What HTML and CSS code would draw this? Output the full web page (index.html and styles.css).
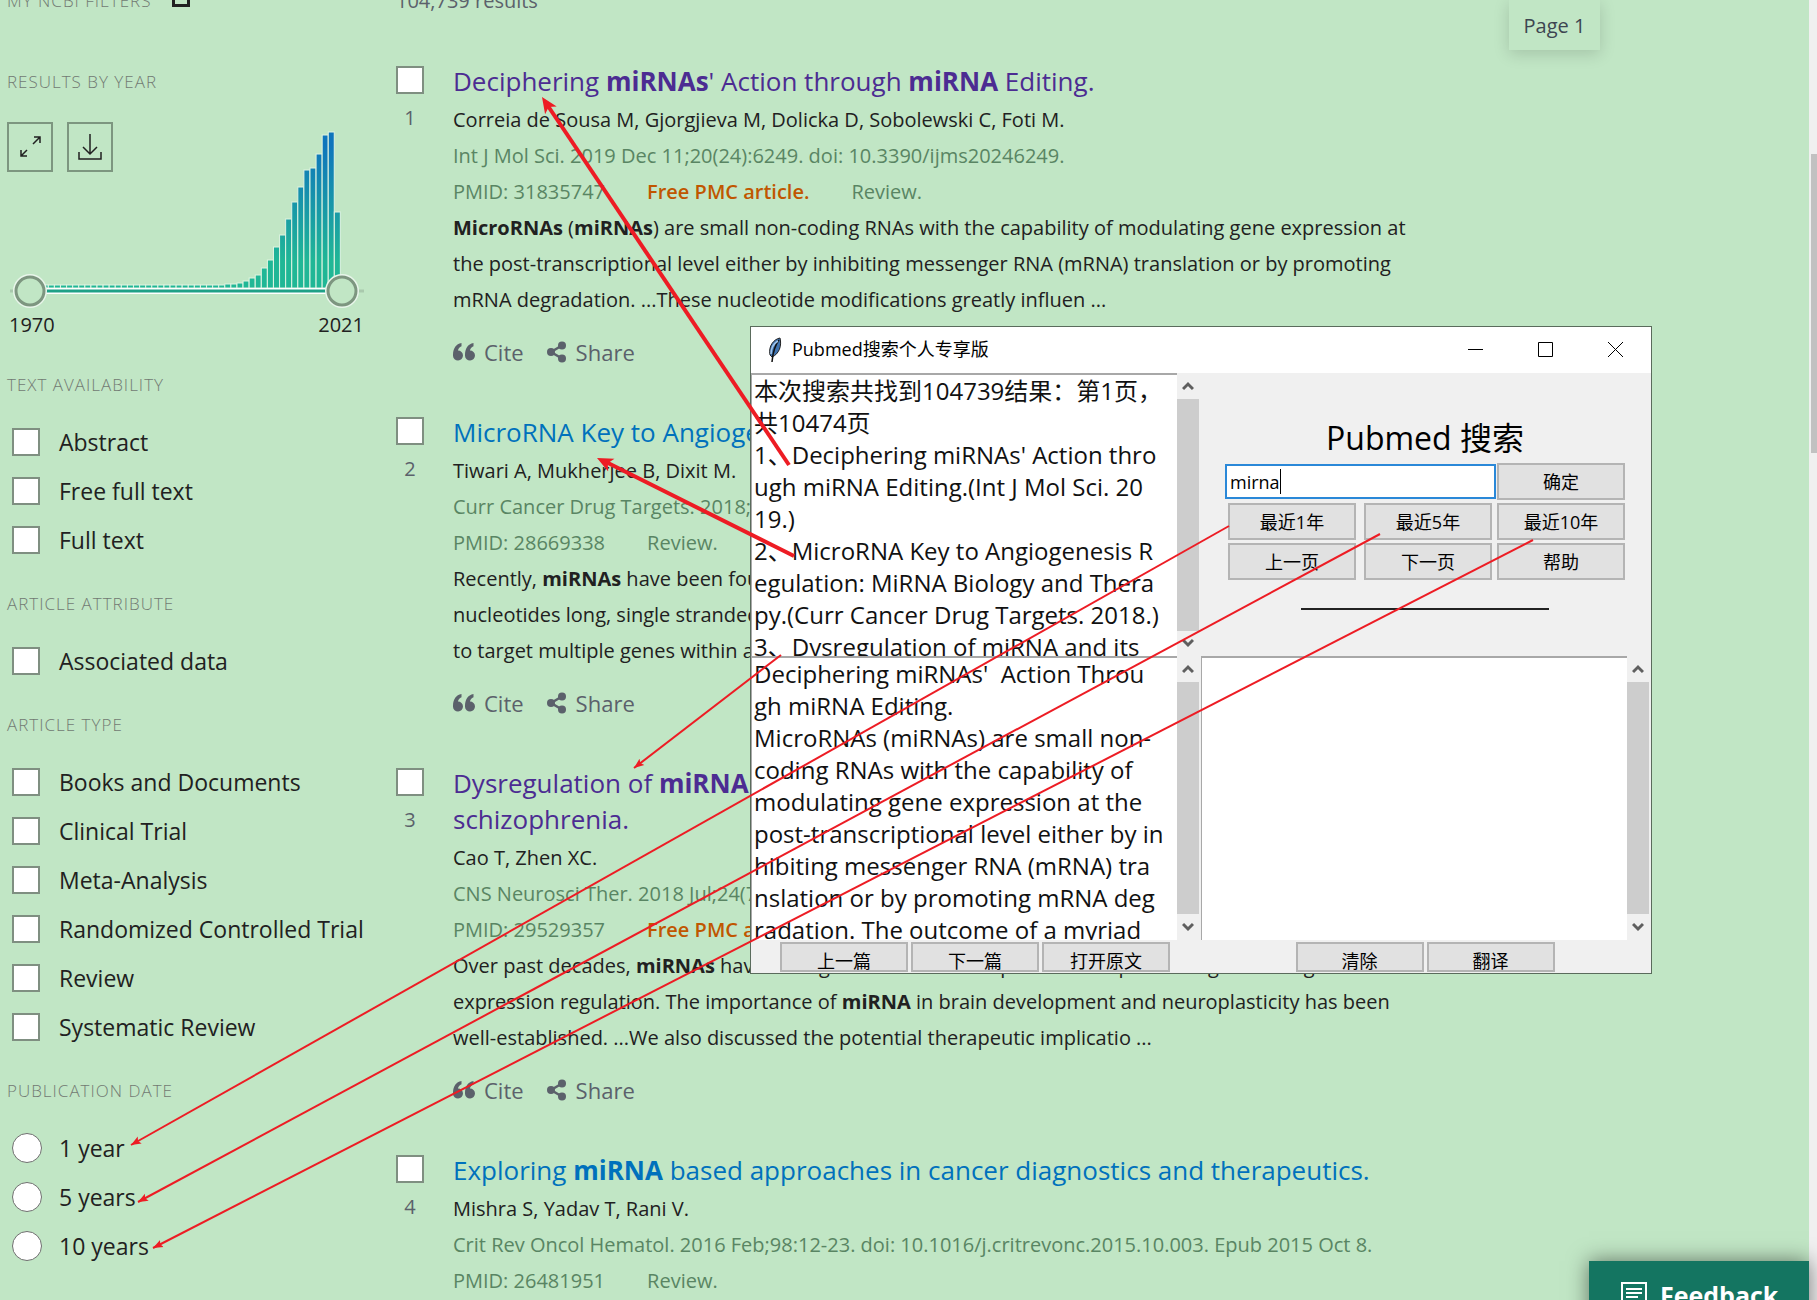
FILE: index.html
```html
<!DOCTYPE html>
<html lang="en">
<head>
    <meta charset="UTF-8">
    <meta name="viewport" content="width=device-width, initial-scale=1.0">
    <title>mirna - Search Results</title>
    <link rel="stylesheet" href="styles.css">
</head>
<body>
    <!-- icons used more than once -->
    <svg class="sprite" aria-hidden="true">
        <symbol id="icon-quote" viewBox="0 0 22 20">
            <path d="M8.500 1v3.200C6.500 4.800 5.200 6.500 5 8.600a5 5 0 1 1-5 5.200C-.2 7 2.500 2 8.500 1zM20.500 1v3.200c-2 .6-3.300 2.300-3.500 4.400a5 5 0 1 1-5 5.200C11.800 7 14.500 2 20.500 1z"/>
        </symbol>
        <symbol id="icon-share" viewBox="0 0 20 22">
            <path d="M15 4.500L4 11l11 6.500" fill="none" stroke="#5b616b" stroke-width="2.500"/>
            <circle cx="15" cy="4.500" r="4"/>
            <circle cx="4" cy="11" r="4"/>
            <circle cx="15" cy="17.500" r="4"/>
        </symbol>
        <symbol id="icon-up" viewBox="0 0 12 10">
            <path d="M1 8l5-5 5 5" fill="none" stroke="#5f5f5f" stroke-width="3"/>
        </symbol>
        <symbol id="icon-down" viewBox="0 0 12 10">
            <path d="M1 2l5 5 5-5" fill="none" stroke="#5f5f5f" stroke-width="3"/>
        </symbol>
    </svg>

    <div class="layout">
        <aside class="sidebar">
            <h3 class="my-filters">MY NCBI FILTERS <span class="filter-box"></span></h3>

            <h3>RESULTS BY YEAR</h3>
            <div class="timeline">
                <svg class="timeline-chart" viewBox="7 122 357 188" width="357" height="188">
                    <defs>
                        <linearGradient id="barFill" gradientUnits="userSpaceOnUse" x1="0" y1="145" x2="0" y2="262">
                            <stop offset="0" stop-color="#0f75bc"/>
                            <stop offset="1" stop-color="#20b796"/>
                        </linearGradient>
                    </defs>
                    <g id="bars" fill="url(#barFill)" stroke="#dff3e2" stroke-width="1"></g>
                    <path d="M10 291h354" stroke="#a9c9ad" stroke-width="3"/>
                    <path d="M30 291h312" stroke="#fff" stroke-width="6"/>
                    <path d="M30 291h312" stroke="#1fa187" stroke-width="3"/>
                    <g fill="#c1e6c5">
                        <circle cx="30" cy="291" r="17" fill="#e9f6eb"/>
                        <circle cx="30" cy="291" r="14" stroke="#7d9680" stroke-width="3"/>
                        <circle cx="342" cy="291" r="17" fill="#e9f6eb"/>
                        <circle cx="342" cy="291" r="14" stroke="#7d9680" stroke-width="3"/>
                    </g>
                </svg>
                <div class="timeline-tools">
                    <button aria-label="Expand">
                        <svg width="22" height="22" viewBox="0 0 22 22" fill="none" stroke="#212121" stroke-width="1.500">
                            <path d="M14 8l7-7M15 1h6v6M8 14l-6 6M2 14v6h6"/>
                        </svg>
                    </button>
                    <button aria-label="Download">
                        <svg width="24" height="28" viewBox="0 0 24 28" fill="none" stroke="#212121" stroke-width="1.500">
                            <path d="M12 1v20M5 14l7 7 7-7M1 19v7h22v-7"/>
                        </svg>
                    </button>
                </div>
            </div>
            <div class="years"><span>1970</span><span>2021</span></div>

            <h3>TEXT AVAILABILITY</h3>
            <label><input type="checkbox">Abstract</label>
            <label><input type="checkbox">Free full text</label>
            <label><input type="checkbox">Full text</label>

            <h3>ARTICLE ATTRIBUTE</h3>
            <label><input type="checkbox">Associated data</label>

            <h3>ARTICLE TYPE</h3>
            <label><input type="checkbox">Books and Documents</label>
            <label><input type="checkbox">Clinical Trial</label>
            <label><input type="checkbox">Meta-Analysis</label>
            <label><input type="checkbox">Randomized Controlled Trial</label>
            <label><input type="checkbox">Review</label>
            <label><input type="checkbox">Systematic Review</label>

            <h3>PUBLICATION DATE</h3>
            <label><input type="radio" name="date">1 year</label>
            <label><input type="radio" name="date">5 years</label>
            <label><input type="radio" name="date">10 years</label>
        </aside>

        <main class="results">
            <div class="amount">104,739 results</div>

            <article class="result">
                <div class="pick"><input type="checkbox" id="r1" aria-label="Select result 1"><label for="r1">1</label></div>
                <div class="docsum">
                    <a class="title visited" href="#">Deciphering <b>miRNAs</b>' Action through <b>miRNA</b> Editing.</a>
                    <p>Correia de Sousa M, Gjorgjieva M, Dolicka D, Sobolewski C, Foti M.</p>
                    <p class="cit">Int J Mol Sci. 2019 Dec 11;20(24):6249. doi: 10.3390/ijms20246249.</p>
                    <p class="cit ids"><span>PMID: 31835747</span><span class="free">Free PMC article.</span><span>Review.</span></p>
                    <p><b>MicroRNAs</b> (<b>miRNAs</b>) are small non-coding RNAs with the capability of modulating gene expression at<br>the post-transcriptional level either by inhibiting messenger RNA (mRNA) translation or by promoting<br>mRNA degradation. ...These nucleotide modifications greatly influen ...</p>
                    <div class="actions">
                        <button class="cite"><svg width="22" height="20"><use href="#icon-quote"/></svg>Cite</button>
                        <button><svg width="20" height="22"><use href="#icon-share"/></svg>Share</button>
                    </div>
                </div>
            </article>

            <article class="result">
                <div class="pick"><input type="checkbox" id="r2" aria-label="Select result 2"><label for="r2">2</label></div>
                <div class="docsum">
                    <a class="title" href="#">MicroRNA Key to Angiogenesis Regulation: MiRNA Biology and Therapy.</a>
                    <p>Tiwari A, Mukherjee B, Dixit M.</p>
                    <p class="cit">Curr Cancer Drug Targets. 2018;18(3):266-277.</p>
                    <p class="cit ids"><span>PMID: 28669338</span><span>Review.</span></p>
                    <p>Recently, <b>miRNAs</b> have been found to be key regulators of angiogenesis.<br>nucleotides long, single stranded RNA molecules with the ability<br>to target multiple genes within a cell.</p>
                    <div class="actions">
                        <button class="cite"><svg width="22" height="20"><use href="#icon-quote"/></svg>Cite</button>
                        <button><svg width="20" height="22"><use href="#icon-share"/></svg>Share</button>
                    </div>
                </div>
            </article>

            <article class="result">
                <div class="pick"><input type="checkbox" id="r3" aria-label="Select result 3"><label for="r3">3</label></div>
                <div class="docsum">
                    <a class="title visited" href="#">Dysregulation of <b>miRNA</b> and its potential therapeutic application in<br>schizophrenia.</a>
                    <p>Cao T, Zhen XC.</p>
                    <p class="cit">CNS Neurosci Ther. 2018 Jul;24(7):586-597.</p>
                    <p class="cit ids"><span>PMID: 29529357</span><span class="free">Free PMC article.</span><span>Review.</span></p>
                    <p>Over past decades, <b>miRNAs</b> have emerged as an essential post-transcriptional regulator of gene<br>expression regulation. The importance of <b>miRNA</b> in brain development and neuroplasticity has been<br>well-established. ...We also discussed the potential therapeutic implicatio ...</p>
                    <div class="actions">
                        <button class="cite"><svg width="22" height="20"><use href="#icon-quote"/></svg>Cite</button>
                        <button><svg width="20" height="22"><use href="#icon-share"/></svg>Share</button>
                    </div>
                </div>
            </article>

            <article class="result">
                <div class="pick"><input type="checkbox" id="r4" aria-label="Select result 4"><label for="r4">4</label></div>
                <div class="docsum">
                    <a class="title" href="#">Exploring <b>miRNA</b> based approaches in cancer diagnostics and therapeutics.</a>
                    <p>Mishra S, Yadav T, Rani V.</p>
                    <p class="cit">Crit Rev Oncol Hematol. 2016 Feb;98:12-23. doi: 10.1016/j.critrevonc.2015.10.003. Epub 2015 Oct 8.</p>
                    <p class="cit ids"><span>PMID: 26481951</span><span>Review.</span></p>
                </div>
            </article>
        </main>
    </div>

    <div class="page-badge">Page 1</div>
    <div class="page-scroll"><div class="page-thumb"></div></div>
    <button class="feedback">
        <svg width="26" height="26" viewBox="0 0 26 26" fill="none" stroke="#fff" stroke-width="2">
            <path d="M1 1h24v19H12l-5 5v-5H1zM5 7h16M5 11h16M5 15h12"/>
        </svg>
        Feedback
    </button>

    <!-- desktop search tool -->
    <section class="window">
        <header class="titlebar">
            <svg class="feather" width="16" height="26" viewBox="0 0 16 26">
                <path d="M13 1C7 2 1 9 3 18l2 2C12 17 15 9 13 1z" fill="#3f73b0" stroke="#222" stroke-width="1"/>
                <path d="M12 3C8 8 6 14 5 25" fill="none" stroke="#111" stroke-width="1.500"/>
                <path d="M11 4C6 7 4 12 4 17" fill="none" stroke="#9fc3ea" stroke-width="1.500"/>
            </svg>
            <span class="window-name">Pubmed搜索个人专享版</span>
            <button aria-label="Minimize"><svg width="16" height="16"><path d="M0 7.500h15"/></svg></button>
            <button aria-label="Maximize"><svg width="16" height="16"><path d="M.5.5h14v14H.5z"/></svg></button>
            <button aria-label="Close"><svg width="16" height="16"><path d="M0 0l15 15M15 0L0 15"/></svg></button>
        </header>

        <div class="panes">
            <div class="pane">
                <textarea readonly aria-label="Results">本次搜索共找到104739结果：第1页，
共10474页
1、Deciphering miRNAs' Action thro
ugh miRNA Editing.(Int J Mol Sci. 20
19.)
2、MicroRNA Key to Angiogenesis R
egulation: MiRNA Biology and Thera
py.(Curr Cancer Drug Targets. 2018.)
3、Dysregulation of miRNA and its</textarea>
                <div class="scroll"><svg width="12" height="10"><use href="#icon-up"/></svg><div class="thumb"></div><svg width="12" height="10"><use href="#icon-down"/></svg></div>
            </div>

            <form class="search" onsubmit="return false">
                <h1>Pubmed 搜索</h1>
                <div class="controls">
                    <div class="term"><input type="text" value="mirna" size="5" aria-label="Search term"><i class="caret"></i></div>
                    <button>确定</button>
                    <button>最近1年</button>
                    <button>最近5年</button>
                    <button>最近10年</button>
                    <button>上一页</button>
                    <button>下一页</button>
                    <button>帮助</button>
                </div>
                <hr>
            </form>

            <div class="pane">
                <textarea readonly aria-label="Abstract">Deciphering miRNAs'  Action Throu
gh miRNA Editing.
MicroRNAs (miRNAs) are small non-
coding RNAs with the capability of
modulating gene expression at the
post-transcriptional level either by in
hibiting messenger RNA (mRNA) tra
nslation or by promoting mRNA deg
radation. The outcome of a myriad</textarea>
                <div class="scroll"><svg width="12" height="10"><use href="#icon-up"/></svg><div class="thumb"></div><svg width="12" height="10"><use href="#icon-down"/></svg></div>
            </div>

            <div class="pane">
                <textarea class="translation" aria-label="Translation"></textarea>
                <div class="scroll"><svg width="12" height="10"><use href="#icon-up"/></svg><div class="thumb"></div><svg width="12" height="10"><use href="#icon-down"/></svg></div>
            </div>

            <div class="bar">
                <button>上一篇</button>
                <button>下一篇</button>
                <button>打开原文</button>
            </div>
            <div class="bar">
                <button>清除</button>
                <button>翻译</button>
            </div>
        </div>
    </section>

    <!-- arrows from the tool to the page -->
    <svg class="arrows" width="1817" height="1300" aria-hidden="true">
        <defs>
            <marker id="head" markerUnits="userSpaceOnUse" markerWidth="12" markerHeight="10" refX="10" refY="5" orient="auto">
                <path d="M10 5L0 1l2 4-2 4z" fill="#ed1c24"/>
            </marker>
            <marker id="headBig" markerUnits="userSpaceOnUse" markerWidth="18" markerHeight="16" refX="16" refY="8" orient="auto">
                <path d="M16 8L0 1l4 7-4 7z" fill="#ed1c24"/>
            </marker>
        </defs>
        <!-- thick lines stop short so the tips stay sharp -->
        <g stroke="#ed1c24" stroke-width="4">
            <path d="M789 465L548 106"/>
            <path d="M794 556L606 462"/>
        </g>
        <g stroke="none" fill="none">
            <path d="M789 465L542 97" marker-end="url(#headBig)"/>
            <path d="M794 556L597 458" marker-end="url(#headBig)"/>
        </g>
        <g stroke="#ed1c24" stroke-width="2">
            <path d="M781 655L634 768" marker-end="url(#head)"/>
            <path d="M1229 526L131 1145" marker-end="url(#head)"/>
            <path d="M1380 534L138 1202" marker-end="url(#head)"/>
            <path d="M1533 540L153 1248" marker-end="url(#head)"/>
        </g>
    </svg>

    <script>
        // top of each bar from 1999 to 2021, earlier years stay at the minimum
        const tops = [285, 285, 285, 285, 284, 284, 283, 281, 278, 275, 268, 260, 247, 235, 219, 202, 187, 170, 168, 154, 135, 132, 212];
        const bars = document.getElementById('bars');

        for (let i = 0; i < 52; i++) {
            const top = i < 29 ? 285 : tops[i - 29];
            const rect = document.createElementNS('http://www.w3.org/2000/svg', 'rect');
            rect.setAttribute('x', 24 + i * 6.085);
            rect.setAttribute('y', top);
            rect.setAttribute('width', 6);
            rect.setAttribute('height', 288 - top);
            bars.appendChild(rect);
        }
    </script>
</body>
</html>
```

FILE: styles.css
```css
* {
    box-sizing: border-box;
}
body {
    position: relative;
    margin: 0;
    height: 100vh;
    overflow: hidden;
    background-color: #c1e6c5;
    color: #212121;
    font-family: "Open Sans", "Noto Sans CJK SC", sans-serif;
    font-size: 20px;
    line-height: 36px;
}
button, input, textarea {
    font-family: inherit;
    margin: 0;
}
button {
    padding: 0;
}
p, h1, h3 {
    margin: 0;
}
.sprite {
    display: none;
}
.layout {
    display: grid;
    grid-template-columns: 357px 1fr;
    column-gap: 32px;
    margin-top: -17px;
    padding-left: 7px;
}

/* Sidebar */
.sidebar {
    display: flex;
    flex-direction: column;
}
.sidebar h3 {
    margin: 22px 0 14px;
    color: #727a73;
    font-size: 17px;
    font-weight: 300;
    letter-spacing: 1px;
}
.sidebar .my-filters {
    margin: 0 0 23px;
}
.filter-box {
    display: inline-block;
    width: 18px;
    height: 18px;
    margin-left: 15px;
    border: 3px solid #212121;
}
.sidebar label {
    display: flex;
    align-items: center;
    gap: 19px;
    height: 49px;
    padding-left: 5px;
    font-size: 23px;
}
input[type="checkbox"], input[type="radio"] {
    appearance: none;
    flex: none;
    width: 28px;
    height: 28px;
    border: 2px solid #7f8f81;
    background-color: #fff;
}
input[type="radio"] {
    width: 30px;
    height: 30px;
    margin-right: -2px;
    border: 1px solid #6f6f6f;
    border-radius: 50%;
}
.timeline {
    display: grid;
    margin-top: 8px;
}
.timeline > * {
    grid-area: 1 / 1;
}
.timeline-tools {
    display: flex;
    gap: 14px;
    align-self: start;
}
.timeline-tools button {
    display: grid;
    place-items: center;
    width: 46px;
    height: 50px;
    border: 2px solid #7d9680;
    background: none;
}
.years {
    display: flex;
    justify-content: space-between;
    margin-bottom: 5px;
    padding-left: 2px;
    line-height: 30px;
}

/* Results */
.amount {
    margin-bottom: 45px;
    color: #5b616b;
}
.result {
    display: flex;
    gap: 29px;
    margin-bottom: 45px;
}
.pick {
    display: flex;
    flex-direction: column;
    align-items: center;
    width: 28px;
    padding-top: 2px;
    color: #5b616b;
}
.pick label {
    margin-top: 6px;
}
.title {
    display: block;
    margin: -1px 0 3px;
    color: #0071bc;
    font-size: 26px;
    text-decoration: none;
    white-space: nowrap;
}
.title.visited {
    color: #4c2c92;
}
.docsum p {
    white-space: nowrap;
}
.docsum .cit {
    color: #598563;
}
.ids {
    display: flex;
    gap: 42px;
}
.free {
    color: #c05600;
    font-weight: 600;
}
.actions {
    display: flex;
    gap: 23px;
    margin-top: 16px;
}
.actions button {
    display: flex;
    align-items: center;
    gap: 9px;
    height: 36px;
    border: none;
    background: none;
    color: #5b616b;
    fill: #5b616b;
    font-size: 22px;
}

/* Things on top of the page */
.page-badge {
    position: absolute;
    top: 0;
    right: 217px;
    width: 91px;
    height: 50px;
    background-color: #c1e6c5;
    box-shadow: 0 4px 15px rgba(0, 0, 0, 0.15);
    color: #3d4551;
    line-height: 52px;
    text-align: center;
}
.page-scroll {
    position: absolute;
    top: 0;
    right: 0;
    width: 8px;
    height: 100%;
    padding: 154px 0 0 2px;
    background-color: #f0f0f0;
}
.page-thumb {
    height: 299px;
    background-color: #c1c1c1;
}
.feedback {
    position: absolute;
    right: 8px;
    bottom: -29px;
    display: flex;
    align-items: center;
    gap: 13px;
    width: 220px;
    height: 68px;
    padding-left: 32px;
    border: none;
    background-color: #147561;
    box-shadow: 0 0 20px rgba(0, 0, 0, 0.5);
    color: #fff;
    font-size: 25px;
    font-weight: 700;
}

/* Search tool window */
.window {
    position: absolute;
    top: 326px;
    left: 750px;
    width: 902px;
    border: 1px solid #5a6b5c;
    background-color: #f0f0f0;
    color: #000;
}
.titlebar {
    display: flex;
    align-items: center;
    height: 46px;
    padding-left: 16px;
    background-color: #fff;
}
.window-name {
    flex: 1;
    padding: 0 0 2px 9px;
    font-size: 18px;
}
.titlebar button {
    display: grid;
    place-items: center;
    width: 70px;
    height: 46px;
    border: none;
    background: none;
}
.titlebar button svg {
    fill: none;
    stroke: #000;
}
.panes {
    display: grid;
    grid-template-columns: 1fr 1fr;
    grid-template-rows: 283px 284px 33px;
}
.pane {
    display: flex;
}
.pane textarea {
    flex: 1;
    min-width: 0;
    padding: 0 0 0 2px;
    border: none;
    border-top: 2px solid #a8a8a8;
    border-left: 1px solid #a8a8a8;
    border-radius: 0;
    outline: none;
    background-color: #fff;
    color: #111;
    font-size: 24px;
    line-height: 32px;
    white-space: pre;
    overflow: hidden;
    resize: none;
}
.scroll {
    display: flex;
    flex-direction: column;
    align-items: center;
    justify-content: space-between;
    width: 24px;
    padding: 8px 2px 8px 0;
}
.thumb {
    width: 22px;
    height: 232px;
    background-color: #cdcdcd;
}
.search {
    display: flex;
    flex-direction: column;
    align-items: center;
    padding: 40px 2px 0 0;
}
.search h1 {
    height: 50px;
    font-size: 32px;
    font-weight: 400;
    line-height: 50px;
}
.controls {
    display: grid;
    grid-template-columns: 131px 136px 133px;
    row-gap: 3px;
}
.controls button, .bar button {
    justify-self: end;
    width: 128px;
    height: 37px;
    border: 2px solid #b4b4b4;
    background-color: #e1e1e1;
    color: #000;
    font-size: 18px;
    line-height: 30px;
}
.term {
    display: flex;
    align-items: center;
    grid-column: span 2;
    width: 271px;
    height: 35px;
    align-self: center;
    padding-left: 3px;
    border: 2px solid #2a88d8;
    background-color: #fff;
}
.term input {
    width: 50px;
    padding: 0;
    border: none;
    outline: none;
    font-size: 18px;
}
.caret {
    width: 1px;
    height: 25px;
    background-color: #000;
}
.search hr {
    width: 248px;
    margin: 28px 0 0;
    border: none;
    border-top: 2px solid #222;
}
.bar {
    display: flex;
    justify-content: center;
    gap: 3px;
    padding: 2px 2px 0 0;
}
.bar button {
    height: 30px;
    padding-top: 2px;
}
.arrows {
    position: absolute;
    top: 0;
    left: 0;
    pointer-events: none;
}
```
